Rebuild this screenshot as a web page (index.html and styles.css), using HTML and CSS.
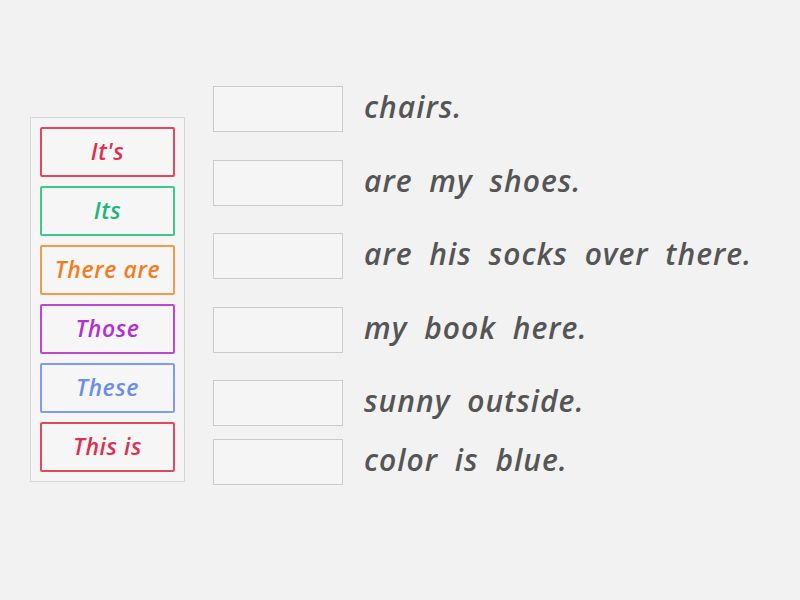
FILE: index.html
```
<!DOCTYPE html>
<html lang="en">
<head>
    <meta charset="UTF-8">
    <title>Complete the sentences</title>
    <link rel="stylesheet" href="styles.css">
</head>
<body>
    <div class="board">
        <div class="bank">
            <div class="tile red">It's</div>
            <div class="tile green">Its</div>
            <div class="tile orange">There are</div>
            <div class="tile purple">Those</div>
            <div class="tile blue">These</div>
            <div class="tile red">This is</div>
        </div>
        <div class="sentences">
            <div class="row"><div class="slot"></div><span class="text">chairs.</span></div>
            <div class="row"><div class="slot"></div><span class="text">are my shoes.</span></div>
            <div class="row"><div class="slot"></div><span class="text">are his socks over there.</span></div>
            <div class="row"><div class="slot"></div><span class="text">my book here.</span></div>
            <div class="row"><div class="slot"></div><span class="text">sunny outside.</span></div>
            <div class="row tight"><div class="slot"></div><span class="text">color is blue.</span></div>
        </div>
    </div>
</body>
</html>
```
FILE: styles.css
```
* {
    box-sizing: border-box;
    margin: 0;
    padding: 0;
}

body {
    width: 800px;
    height: 600px;
    overflow: hidden;
    background-color: #f3f2f2;
    font-family: "Open Sans", sans-serif;
    font-style: italic;
}

.board {
    display: flex;
    align-items: flex-start;
    padding: 86px 0 0 30px;
}

.bank {
    margin-top: 31px;
    width: 155px;
    padding: 9px;
    border: 1px solid #d6d6d6;
    background-color: #f5f5f5;
    display: flex;
    flex-direction: column;
    gap: 9px;
}

.tile {
    height: 50px;
    border: 2.5px solid;
    border-radius: 2px;
    display: flex;
    align-items: center;
    justify-content: center;
    font-size: 23px;
    font-weight: 600;
    letter-spacing: 0.6px;
    padding-bottom: 3px;
    background-color: #f6f6f6;
}

.red { color: #dc3050; border-color: #de4860; }
.green { color: #1db67a; border-color: #3bc98c; }
.orange { color: #f27d1e; border-color: #f59a4a; }
.purple { color: #b32fd0; border-color: #bb48d6; }
.blue { color: #6a8de8; border-color: #7f9cef; }

.sentences {
    margin-left: 28px;
    display: flex;
    flex-direction: column;
    gap: 27.6px;
}

.row {
    display: flex;
    align-items: center;
    height: 46px;
}

.row.tight {
    margin-top: -15px;
}

.slot {
    width: 130px;
    height: 46px;
    border: 1px solid #cbcbcb;
    background-color: #f6f5f5;
}

.text {
    margin-left: 21px;
    padding-bottom: 5px;
    font-size: 30px;
    font-weight: 600;
    color: #555555;
    letter-spacing: 1px;
    word-spacing: 8px;
}
```
